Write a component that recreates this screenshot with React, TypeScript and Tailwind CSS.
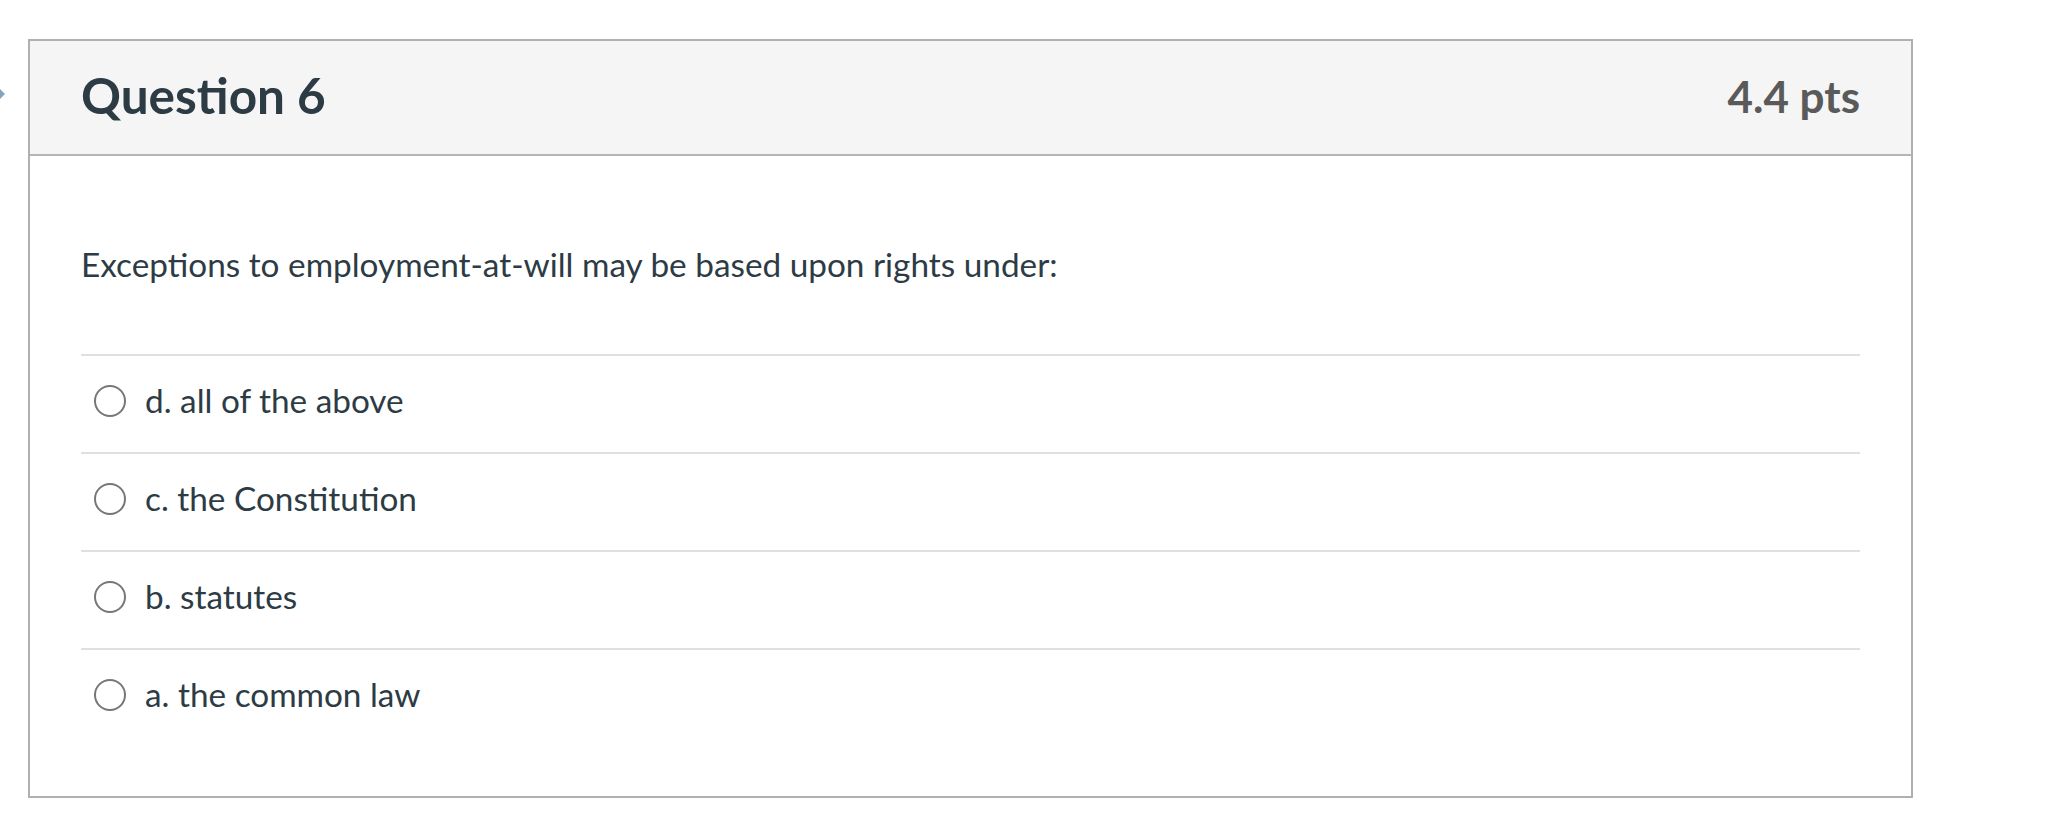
import React from 'react';

const answers = ['d. all of the above', 'c. the Constitution', 'b. statutes', 'a. the common law'];

const Radio: React.FC = () => (
  <span className="block w-8 h-8 shrink-0 rounded-full border-2 border-[#777777] bg-white" />
);

export default function App() {
  return (
    <div className="relative min-h-[816px] bg-white text-[#2d3b45]" style={{ fontFamily: 'Lato, "Open Sans", sans-serif' }}>
      {/* nav marker peeking in from the left edge */}
      <svg className="absolute left-0 top-[84px]" width="8" height="20" viewBox="0 0 8 20">
        <polygon points="-5,0 5,10 -5,20" fill="#86a3bd" />
      </svg>

      <div className="ml-[28px] pt-[39px] w-[1885px]">
        <div className="border-2 border-[#b0b0b0] bg-white">
          <div className="h-[115px] bg-[#f5f5f5] border-b-2 border-[#b5b5b5] px-[51px] flex items-center justify-between">
            <h2 className="text-[49.5px] font-bold leading-none pb-[3px]">Question 6</h2>
            <div className="text-[44px] font-bold leading-none text-[#5a5a5a] pb-[3px]">4.4 pts</div>
          </div>

          <div className="px-[51px] pt-[84px] pb-[50px]">
            <p className="text-[33.33px] leading-[48px]">Exceptions to employment-at-will may be based upon rights under:</p>

            <div className="mt-[66px]">
              {answers.map((a) => (
                <div key={a} className="border-t-2 border-[#e0e0e0]">
                  <label className="h-[96px] pb-[6px] pl-[13px] flex items-center gap-[19px] cursor-pointer">
                    <Radio />
                    <span className="text-[33.33px] leading-[40px] pb-[2px]">{a}</span>
                  </label>
                </div>
              ))}
            </div>
          </div>
        </div>
      </div>
    </div>
  );
}
